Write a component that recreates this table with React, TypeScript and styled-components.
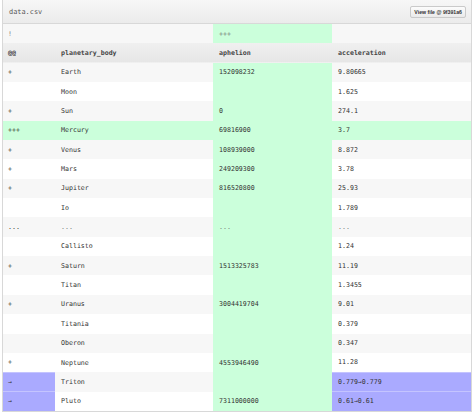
import React from "react";
import styled, { createGlobalStyle, css } from "styled-components";

const Global = createGlobalStyle`
  html, body { margin: 0; padding: 0; background: #fff; }
  body { font-family: "DejaVu Sans Mono", monospace; }
`;

const Box = styled.div`
  margin: 0 2px;
  border: 1px solid #d8d8d8;
  border-top: none;
  width: 468px;
  background: #fff;
`;

const FileHeader = styled.div`
  height: 23px;
  display: flex;
  align-items: center;
  justify-content: space-between;
  padding: 0 5px 0 6px;
  background: linear-gradient(#f7f7f7, #ebebeb);
  border-bottom: 1px solid #d8d8d8;
`;

const FileName = styled.span`
  font-family: "DejaVu Sans Mono", monospace;
  font-size: 6.9px;
  color: #555;
`;

const ViewButton = styled.span`
  font-family: "Liberation Sans", Arial, sans-serif;
  font-size: 5.2px;
  font-weight: bold;
  color: #333;
  padding: 2px 3px;
  border: 1px solid #cacaca;
  border-radius: 2px;
  background: linear-gradient(#fcfcfc, #eaeaea);
`;

const Table = styled.table`
  width: 100%;
  border-collapse: collapse;
  table-layout: fixed;
  font-family: "DejaVu Sans Mono", monospace;
  font-size: 6.6px;
  color: #333;
`;

type Kind = "plain" | "added" | "changed" | "head";

const Row = styled.tr<{ $striped?: boolean; $added?: boolean; $head?: boolean }>`
  height: 19.35px;
  background: ${(p) =>
    p.$head
      ? "linear-gradient(#f0f0f0, #e6e6e6)"
      : p.$added
      ? "#cbffdb"
      : p.$striped
      ? "#f7f7f7"
      : "#fff"};
`;

const Cell = styled.td<{ $kind?: Kind; $marker?: boolean; $muted?: boolean }>`
  padding: 0 0 0 ${(p) => (p.$marker ? "5px" : "6px")};
  white-space: nowrap;
  overflow: hidden;
  color: ${(p) => (p.$muted ? "#777" : "#333")};
  ${(p) =>
    p.$kind === "added" &&
    css`
      background: #cbffdb;
    `}
  ${(p) =>
    p.$kind === "changed" &&
    css`
      background: #aaaaff;
      border-top: 1px solid #c4c4ff;
    `}
  ${(p) =>
    p.$kind === "head" &&
    css`
      font-weight: bold;
      color: #444;
    `}
`;

type R = {
  m: string;
  name: string;
  aph: string;
  acc: string;
  added?: boolean;
  changed?: boolean;
};

const rows: R[] = [
  { m: "+", name: "Earth", aph: "152098232", acc: "9.80665" },
  { m: "", name: "Moon", aph: "", acc: "1.625" },
  { m: "+", name: "Sun", aph: "0", acc: "274.1" },
  { m: "+++", name: "Mercury", aph: "69816900", acc: "3.7", added: true },
  { m: "+", name: "Venus", aph: "108939000", acc: "8.872" },
  { m: "+", name: "Mars", aph: "249209300", acc: "3.78" },
  { m: "+", name: "Jupiter", aph: "816520800", acc: "25.93" },
  { m: "", name: "Io", aph: "", acc: "1.789" },
  { m: "...", name: "...", aph: "...", acc: "..." },
  { m: "", name: "Callisto", aph: "", acc: "1.24" },
  { m: "+", name: "Saturn", aph: "1513325783", acc: "11.19" },
  { m: "", name: "Titan", aph: "", acc: "1.3455" },
  { m: "+", name: "Uranus", aph: "3004419704", acc: "9.01" },
  { m: "", name: "Titania", aph: "", acc: "0.379" },
  { m: "", name: "Oberon", aph: "", acc: "0.347" },
  { m: "+", name: "Neptune", aph: "4553946490", acc: "11.28" },
  { m: "→", name: "Triton", aph: "", acc: "0.779→0.779", changed: true },
  { m: "→", name: "Pluto", aph: "7311000000", acc: "0.61→0.61", changed: true },
];

export default function App() {
  return (
    <>
      <Global />
      <Box>
        <FileHeader>
          <FileName>data.csv</FileName>
          <ViewButton>View file @ 9f391a6</ViewButton>
        </FileHeader>
        <Table>
          <colgroup>
            <col style={{ width: 52 }} />
            <col style={{ width: 158 }} />
            <col style={{ width: 119 }} />
            <col />
          </colgroup>
          <tbody>
            <Row $striped>
              <Cell $marker $muted>!</Cell>
              <Cell />
              <Cell $kind="added" $muted>+++</Cell>
              <Cell />
            </Row>
            <Row $head>
              <Cell $marker $kind="head">@@</Cell>
              <Cell $kind="head">planetary_body</Cell>
              <Cell $kind="head">aphelion</Cell>
              <Cell $kind="head">acceleration</Cell>
            </Row>
            {rows.map((r, i) => (
              <Row key={r.name + i} $striped={i % 2 === 0} $added={r.added}>
                <Cell $marker $kind={r.changed ? "changed" : undefined}>
                  {r.m}
                </Cell>
                <Cell $muted={r.name === "..."}>{r.name}</Cell>
                <Cell $kind="added" $muted={r.aph === "..."}>{r.aph}</Cell>
                <Cell $kind={r.changed ? "changed" : undefined} $muted={r.acc === "..."}>
                  {r.acc}
                </Cell>
              </Row>
            ))}
          </tbody>
        </Table>
      </Box>
    </>
  );
}
